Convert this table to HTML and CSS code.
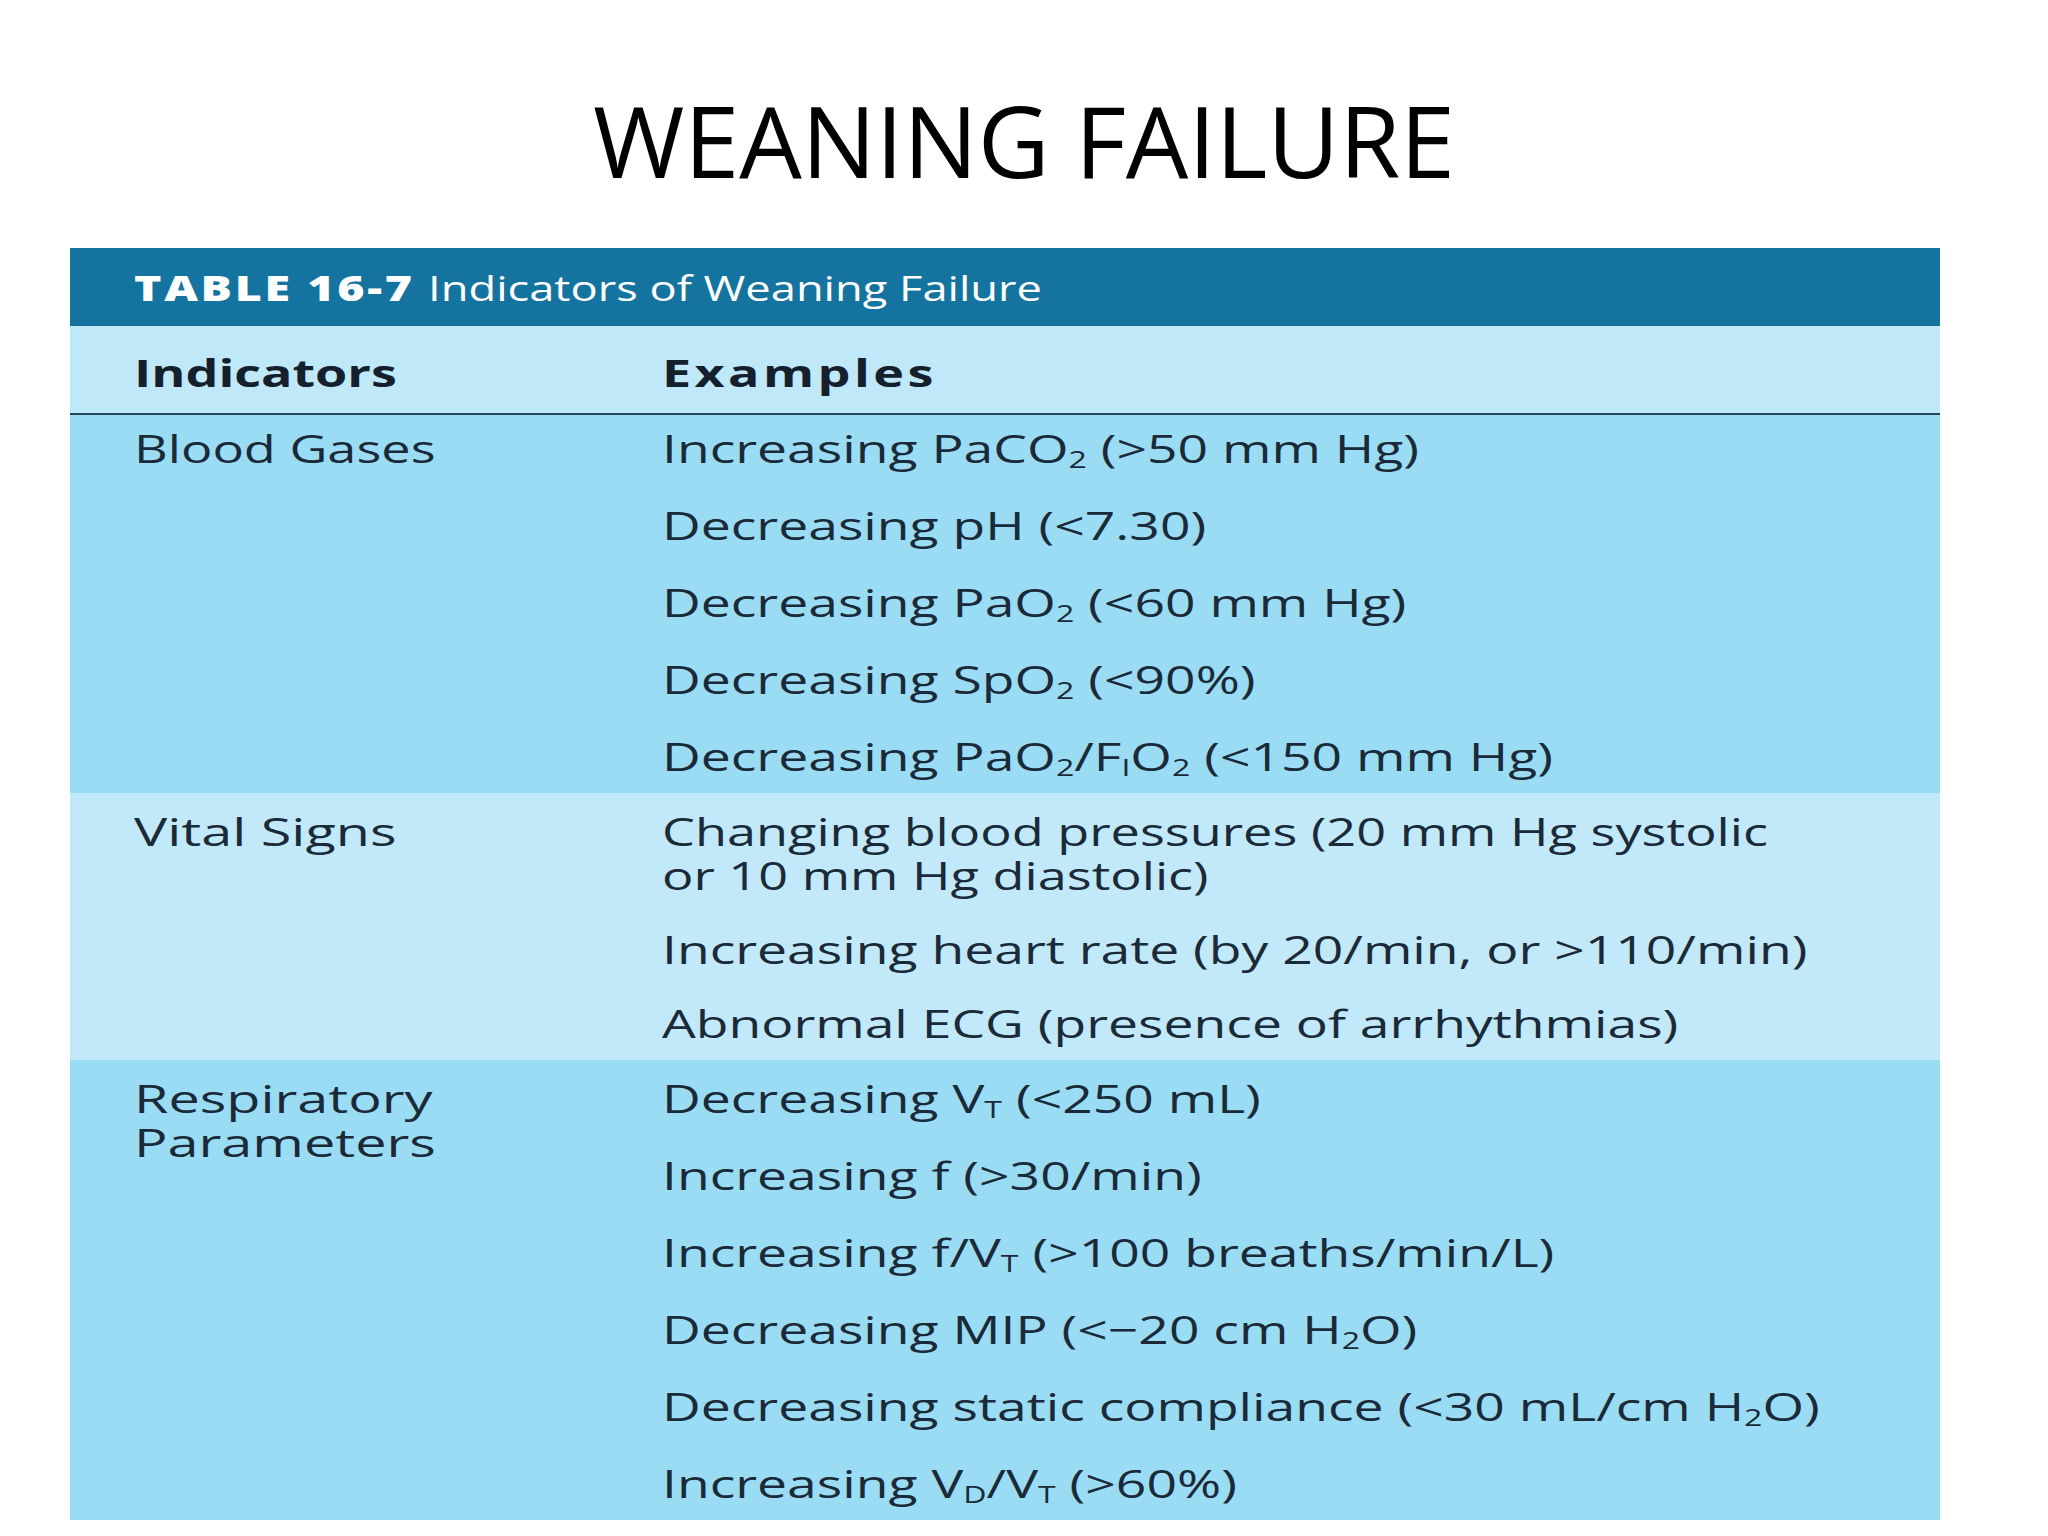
FILE: index.html
```html
<!DOCTYPE html>
<html lang="en">
<head>
<meta charset="utf-8">
<title>Weaning Failure</title>
<link rel="stylesheet" href="styles.css">
</head>
<body>
<main class="slide">
  <h1 class="slide-title">WEANING FAILURE</h1>
  <section class="table">
    <div class="caption"><span class="stretch cap-text"><span class="cap-num">TABLE 16-7</span> <span class="cap-desc">Indicators of Weaning Failure</span></span></div>
    <div class="head-row">
      <div class="label-col"><span class="stretch bold">Indicators</span></div>
      <div class="ex-col"><span class="stretch bold wide">Examples</span></div>
    </div>

    <div class="section section-first">
      <div class="label-col"><span class="stretch narrow">Blood Gases</span></div>
      <div class="items">
        <div class="item"><span class="stretch">Increasing PaCO<sub>2</sub> (&gt;50 mm Hg)</span></div>
        <div class="item"><span class="stretch">Decreasing pH (&lt;7.30)</span></div>
        <div class="item"><span class="stretch">Decreasing PaO<sub>2</sub> (&lt;60 mm Hg)</span></div>
        <div class="item"><span class="stretch">Decreasing SpO<sub>2</sub> (&lt;90%)</span></div>
        <div class="item"><span class="stretch">Decreasing PaO<sub>2</sub>/F<sub>I</sub>O<sub>2</sub> (&lt;150 mm Hg)</span></div>
      </div>
    </div>

    <div class="section section-light">
      <div class="label-col"><span class="stretch wider">Vital Signs</span></div>
      <div class="items items-tight">
        <div class="item"><span class="stretch narrow">Changing blood pressures (20 mm Hg systolic<br>or 10 mm Hg diastolic)</span></div>
        <div class="item"><span class="stretch">Increasing heart rate (by 20/min, or &gt;110/min)</span></div>
        <div class="item"><span class="stretch">Abnormal ECG (presence of arrhythmias)</span></div>
      </div>
    </div>

    <div class="section">
      <div class="label-col"><span class="stretch wider">Respiratory<br>Parameters</span></div>
      <div class="items">
        <div class="item"><span class="stretch">Decreasing V<sub>T</sub> (&lt;250 mL)</span></div>
        <div class="item"><span class="stretch">Increasing f (&gt;30/min)</span></div>
        <div class="item"><span class="stretch">Increasing f/V<sub>T</sub> (&gt;100 breaths/min/L)</span></div>
        <div class="item"><span class="stretch">Decreasing MIP (&lt;&minus;20 cm H<sub>2</sub>O)</span></div>
        <div class="item"><span class="stretch">Decreasing static compliance (&lt;30 mL/cm H<sub>2</sub>O)</span></div>
        <div class="item"><span class="stretch">Increasing V<sub>D</sub>/V<sub>T</sub> (&gt;60%)</span></div>
      </div>
    </div>
  </section>
</main>
</body>
</html>
```

FILE: styles.css
```css
html, body {
  margin: 0;
  padding: 0;
  background: #ffffff;
  overflow: hidden;
}

.slide {
  width: 2048px;
  height: 1536px;
  padding-top: 90px;
  box-sizing: border-box;
}

.slide-title {
  margin: 0;
  font-family: "Open Sans", "Noto Sans", sans-serif;
  font-weight: 400;
  font-size: 99px;
  line-height: 99px;
  letter-spacing: -0.2px;
  color: #000000;
  text-align: center;
}

.table {
  margin: 59px 0 0 70px;
  width: 1870px;
  font-family: "Open Sans", "Noto Sans", sans-serif;
  font-size: 39px;
  color: #1a2a38;
  background: #9bdcf5;
  overflow: hidden;
}

.stretch {
  display: inline-block;
  white-space: nowrap;
  transform: scaleX(1.37);
  transform-origin: 0 50%;
}

.stretch.narrow {
  transform: scaleX(1.34);
}

.stretch.wider {
  transform: scaleX(1.43);
}

.bold {
  font-weight: 700;
  font-size: 38px;
  color: #14202c;
}

.bold.wide {
  letter-spacing: 2.5px;
}

.caption {
  height: 78px;
  display: flex;
  align-items: center;
  padding-left: 64px;
  background: #14749f;
  color: #ffffff;
}

.cap-text {
  transform: scaleX(1.33);
  line-height: 40px;
}

.cap-num {
  font-weight: 800;
  font-size: 35px;
  letter-spacing: 2px;
}

.cap-desc {
  font-weight: 400;
  font-size: 34px;
}

.head-row {
  display: grid;
  grid-template-columns: 592px 1fr;
  line-height: 44px;
  padding: 24px 0 19px;
  background: #bfe8f9;
  border-bottom: 2px solid #26445a;
}

.label-col {
  padding-left: 64px;
  line-height: 44px;
}

.section {
  display: grid;
  grid-template-columns: 592px 1fr;
  align-items: start;
  padding: 16px 0 15px;
  background: #9bdcf5;
}

.section-first {
  padding-top: 11px;
}

.section-light {
  background: #c1e9f9;
}

.items {
  display: flex;
  flex-direction: column;
  gap: 33px;
}

.items-tight {
  gap: 30px;
}

.item {
  line-height: 44px;
}

sub {
  font-size: 0.6em;
  line-height: 0;
  vertical-align: -0.22em;
}
```
